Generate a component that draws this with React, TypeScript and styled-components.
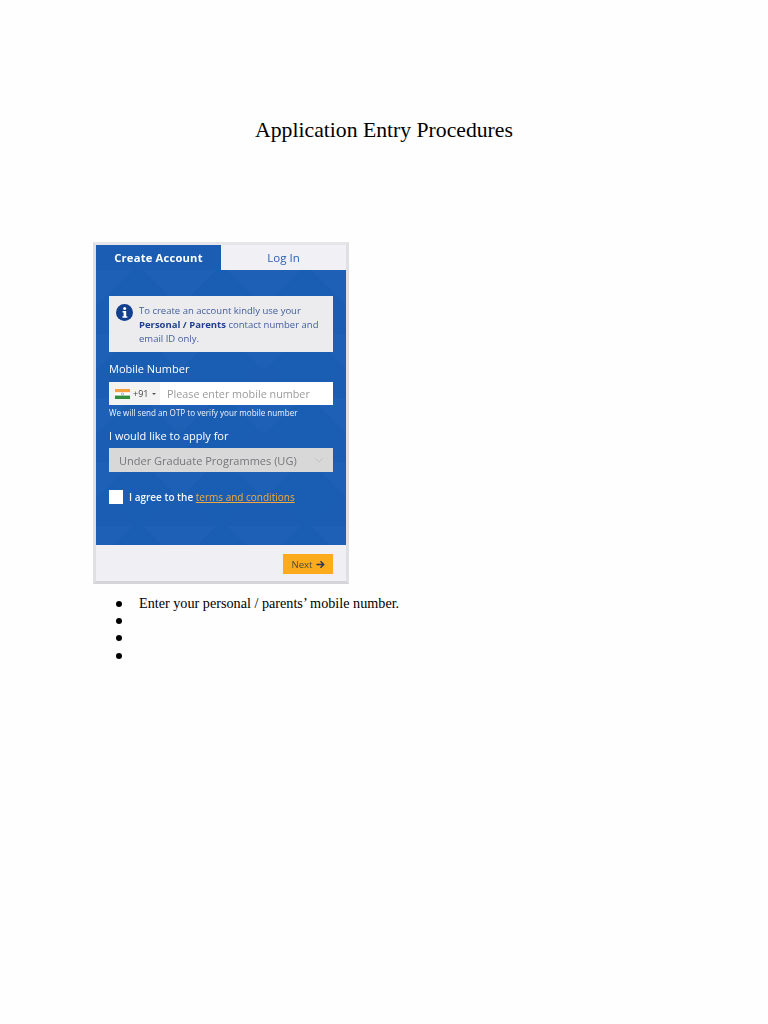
import React from "react";
import styled, { createGlobalStyle } from "styled-components";

const Global = createGlobalStyle`
  html, body { margin: 0; padding: 0; background: #fefefe; }
  body { font-family: "Liberation Serif", "Times New Roman", serif; color: #000; }
`;

const Page = styled.main`
  width: 768px;
  height: 1024px;
  box-sizing: border-box;
  padding-top: 116px;
  overflow: hidden;
`;

const Title = styled.h1`
  margin: 0;
  font-size: 21.7px;
  line-height: 28px;
  font-weight: 400;
  text-align: center;
`;

const Card = styled.section`
  width: 250px;
  margin: 98px 0 0 93px;
  border: 3px solid #dfdfe4;
  border-top-color: #e6e6ea;
  border-bottom-color: #d4d4d9;
  font-family: "Open Sans", "Noto Sans", sans-serif;
  background: #f0eff3;
  filter: blur(0.35px);
`;

const Tabs = styled.div`
  display: grid;
  grid-template-columns: 125px 125px;
  height: 25px;
`;

const Tab = styled.div<{ $active?: boolean }>`
  display: flex;
  align-items: center;
  justify-content: center;
  font-size: ${(p) => (p.$active ? "11.2px" : "11.5px")};
  letter-spacing: ${(p) => (p.$active ? "0.2px" : "0")};
  font-weight: ${(p) => (p.$active ? 700 : 400)};
  color: ${(p) => (p.$active ? "#ffffff" : "#2c62b0")};
  background: ${(p) => (p.$active ? "#1a5db3" : "#f1f0f5")};
`;

const Body = styled.div`
  height: 275px;
  box-sizing: border-box;
  padding: 26px 13px 0 13px;
  background-color: #1a5eb4;
  background-image:
    linear-gradient(135deg, rgba(255,255,255,0.012) 25%, transparent 25%),
    linear-gradient(225deg, rgba(255,255,255,0.012) 25%, transparent 25%),
    linear-gradient(45deg, rgba(0,0,0,0.012) 25%, transparent 25%),
    linear-gradient(315deg, rgba(0,0,0,0.012) 25%, transparent 25%);
  background-size: 84px 64px;
`;

const Notice = styled.div`
  display: flex;
  gap: 6px;
  height: 56px;
  box-sizing: border-box;
  padding: 8px 6px 0 7px;
  background: #ecebee;
  font-size: 9.5px;
  line-height: 14px;
  color: #42609e;
`;

const InfoIcon = styled.svg`
  flex: none;
  width: 17px;
  height: 17px;
`;

const Strong = styled.strong`
  font-weight: 700;
  color: #1c3f8f;
`;

const Label = styled.div<{ $top: number }>`
  margin-top: ${(p) => p.$top}px;
  font-size: 11px;
  line-height: 16px;
  color: #fff;
`;

const PhoneField = styled.div`
  display: flex;
  align-items: stretch;
  height: 23px;
  margin-top: 5px;
  background: #fff;
`;

const Dial = styled.div`
  display: flex;
  align-items: center;
  width: 51px;
  box-sizing: border-box;
  padding-left: 6px;
  background: #f3f3f3;
  font-size: 9px;
  color: #444;
`;

const Flag = styled.svg`
  width: 15px;
  height: 10px;
  margin-right: 3px;
`;

const Caret = styled.span`
  width: 0;
  height: 0;
  margin-left: 4px;
  border-left: 2px solid transparent;
  border-right: 2px solid transparent;
  border-top: 2px solid #555;
`;

const Placeholder = styled.div`
  display: flex;
  align-items: center;
  padding-left: 7px;
  font-size: 10.8px;
  color: #9b9b9b;
`;

const Hint = styled.div`
  margin-top: 1px;
  font-size: 8.1px;
  line-height: 14px;
  color: #eef3fb;
  white-space: nowrap;
`;

const SelectBox = styled.div`
  display: flex;
  align-items: center;
  justify-content: space-between;
  height: 24px;
  margin-top: 4px;
  padding: 0 9px 0 10px;
  background: #d8d8d8;
  font-size: 11px;
  color: #77757a;
`;

const Chevron = styled.svg`
  width: 10px;
  height: 6px;
`;

const AgreeRow = styled.div`
  display: flex;
  align-items: center;
  gap: 6px;
  margin-top: 18px;
  font-size: 10px;
  font-weight: 600;
  color: #f4f6fb;
`;

const Check = styled.span`
  width: 14px;
  height: 14px;
  background: #fff;
`;

const Terms = styled.span`
  color: #f2a93c;
  text-decoration: underline;
  font-weight: 400;
`;

const Footer = styled.div`
  display: flex;
  justify-content: flex-end;
  align-items: flex-start;
  height: 36px;
  box-sizing: border-box;
  padding: 9px 13px 0 0;
  background: #f0eff3;
`;

const NextButton = styled.div`
  display: flex;
  align-items: center;
  justify-content: center;
  gap: 3px;
  width: 50px;
  height: 20px;
  background: #fbab1c;
  font-size: 9.6px;
  color: #4a4a3a;
`;

const Bullets = styled.ul`
  margin: 11px 0 0;
  padding: 0 0 0 116px;
  list-style: none;
  font-size: 14.2px;
  line-height: 17.4px;
`;

const Bullet = styled.li`
  display: flex;
  align-items: center;
  gap: 17px;
  min-height: 17.4px;

  &::before {
    content: "";
    flex: none;
    width: 6px;
    height: 6px;
    border-radius: 50%;
    background: #000;
  }
`;

export default function App() {
  return (
    <>
      <Global />
      <Page>
        <Title>Application Entry Procedures</Title>
        <Card>
          <Tabs>
            <Tab $active>Create Account</Tab>
            <Tab>Log In</Tab>
          </Tabs>
          <Body>
            <Notice>
              <InfoIcon viewBox="0 0 17 17">
                <circle cx="8.5" cy="8.5" r="8.5" fill="#12408f" />
                <circle cx="8.7" cy="4.6" r="1.5" fill="#fff" />
                <path d="M6.6 7h3.6v5.2h1.1v1.6H6.4v-1.6h1.2V8.6h-1z" fill="#fff" />
              </InfoIcon>
              <div>
                To create an account kindly use your
                <br />
                <Strong>Personal / Parents</Strong> contact number and
                <br />
                email ID only.
              </div>
            </Notice>
            <Label $top={9}>Mobile Number</Label>
            <PhoneField>
              <Dial>
                <Flag viewBox="0 0 15 10">
                  <rect width="15" height="3.4" fill="#f4a23c" />
                  <rect y="3.4" width="15" height="3.2" fill="#fff" />
                  <rect y="6.6" width="15" height="3.4" fill="#2f8f3a" />
                  <circle cx="7.5" cy="5" r="1.1" fill="none" stroke="#33559a" strokeWidth="0.4" />
                </Flag>
                +91
                <Caret />
              </Dial>
              <Placeholder>Please enter mobile number</Placeholder>
            </PhoneField>
            <Hint>We will send an OTP to verify your mobile number</Hint>
            <Label $top={8}>I would like to apply for</Label>
            <SelectBox>
              Under Graduate Programmes (UG)
              <Chevron viewBox="0 0 10 6">
                <path d="M1 1l4 4 4-4" fill="none" stroke="#c2c2c2" strokeWidth="1" />
              </Chevron>
            </SelectBox>
            <AgreeRow>
              <Check />
              <span>
                I agree to the <Terms>terms and conditions</Terms>
              </span>
            </AgreeRow>
          </Body>
          <Footer>
            <NextButton>
              Next
              <svg width="9" height="9" viewBox="0 0 9 9">
                <path d="M0.5 4.5h7M4.5 1.2l3.2 3.3-3.2 3.3" fill="none" stroke="#2a3550" strokeWidth="1.4" />
              </svg>
            </NextButton>
          </Footer>
        </Card>
        <Bullets>
          <Bullet>Enter your personal / parents’ mobile number.</Bullet>
          <Bullet />
          <Bullet />
          <Bullet />
        </Bullets>
      </Page>
    </>
  );
}
